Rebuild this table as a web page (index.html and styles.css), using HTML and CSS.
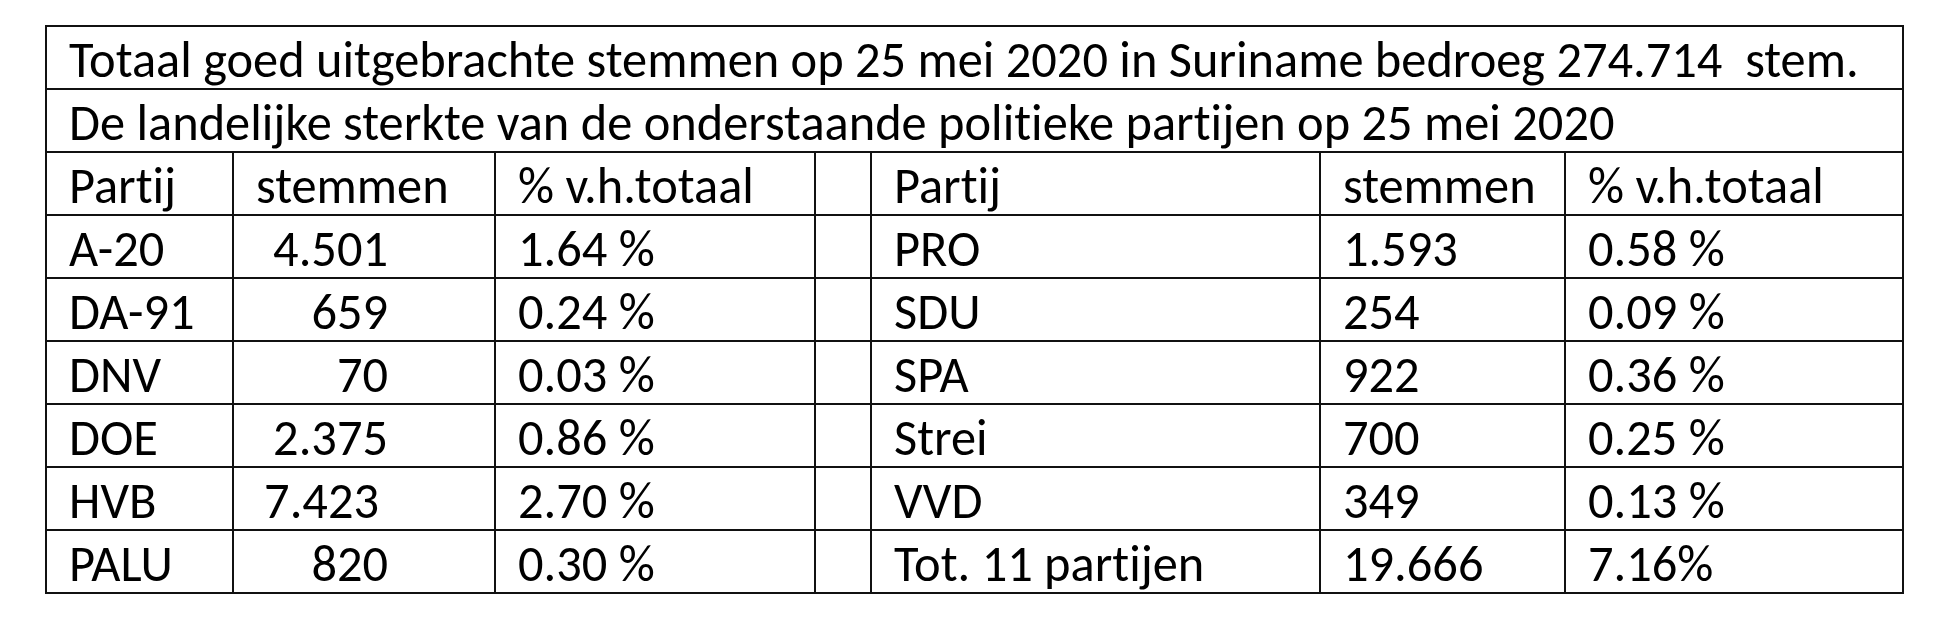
FILE: index.html
```html
<!DOCTYPE html>
<html lang="nl">
<head>
<meta charset="utf-8">
<title>Verkiezingen 25 mei 2020</title>
<link rel="stylesheet" href="styles.css">
</head>
<body>
<table class="results">
  <colgroup>
    <col class="c-party">
    <col class="c-votes">
    <col class="c-pct">
    <col class="c-gap">
    <col class="c-party2">
    <col class="c-votes2">
    <col class="c-pct2">
  </colgroup>
  <tbody>
    <tr><td colspan="7" class="wide">Totaal goed uitgebrachte stemmen op 25 mei 2020 in Suriname bedroeg 274.714&nbsp; stem.</td></tr>
    <tr><td colspan="7" class="wide">De landelijke sterkte van de onderstaande politieke partijen op 25 mei 2020</td></tr>
    <tr><td>Partij</td><td>stemmen</td><td>% v.h.totaal</td><td></td><td class="p2">Partij</td><td>stemmen</td><td>% v.h.totaal</td></tr>
    <tr><td>A-20</td><td class="num">4.501</td><td>1.64 %</td><td></td><td class="p2">PRO</td><td>1.593</td><td>0.58 %</td></tr>
    <tr><td>DA-91</td><td class="num">659</td><td>0.24 %</td><td></td><td class="p2">SDU</td><td>254</td><td>0.09 %</td></tr>
    <tr><td>DNV</td><td class="num">70</td><td>0.03 %</td><td></td><td class="p2">SPA</td><td>922</td><td>0.36 %</td></tr>
    <tr><td>DOE</td><td class="num">2.375</td><td>0.86 %</td><td></td><td class="p2">Strei</td><td>700</td><td>0.25 %</td></tr>
    <tr><td>HVB</td><td class="num num-shift">7.423</td><td>2.70 %</td><td></td><td class="p2">VVD</td><td>349</td><td>0.13 %</td></tr>
    <tr><td>PALU</td><td class="num">820</td><td>0.30 %</td><td></td><td class="p2">Tot. 11 partijen</td><td>19.666</td><td>7.16%</td></tr>
  </tbody>
</table>
</body>
</html>
```
FILE: styles.css
```css
html, body {
  margin: 0;
  padding: 0;
  background: #ffffff;
}

body {
  padding: 25px 0 0 45px;
  font-family: Carlito, Lato, "Liberation Sans", sans-serif;
  font-variant-ligatures: none;
  color: #000000;
}

.results {
  border-collapse: collapse;
  table-layout: fixed;
  width: 1859px;
  font-size: 50.4px;
}

.c-party  { width: 187px; }
.c-votes  { width: 262px; }
.c-pct    { width: 320px; }
.c-gap    { width: 56px; }
.c-party2 { width: 449px; }
.c-votes2 { width: 245px; }
.c-pct2   { width: 338px; }

.results tr {
  height: 63px;
}

.results td {
  border: 2px solid #111111;
  padding: 5.5px 0 0 22px;
  line-height: 1.1;
  vertical-align: top;
  white-space: nowrap;
}

.results td.p2 {
  padding-left: 22px;
}

.results td.num {
  text-align: right;
  padding-left: 0;
  padding-right: 106px;
}

.results td.num-shift {
  padding-right: 115px;
}
```
